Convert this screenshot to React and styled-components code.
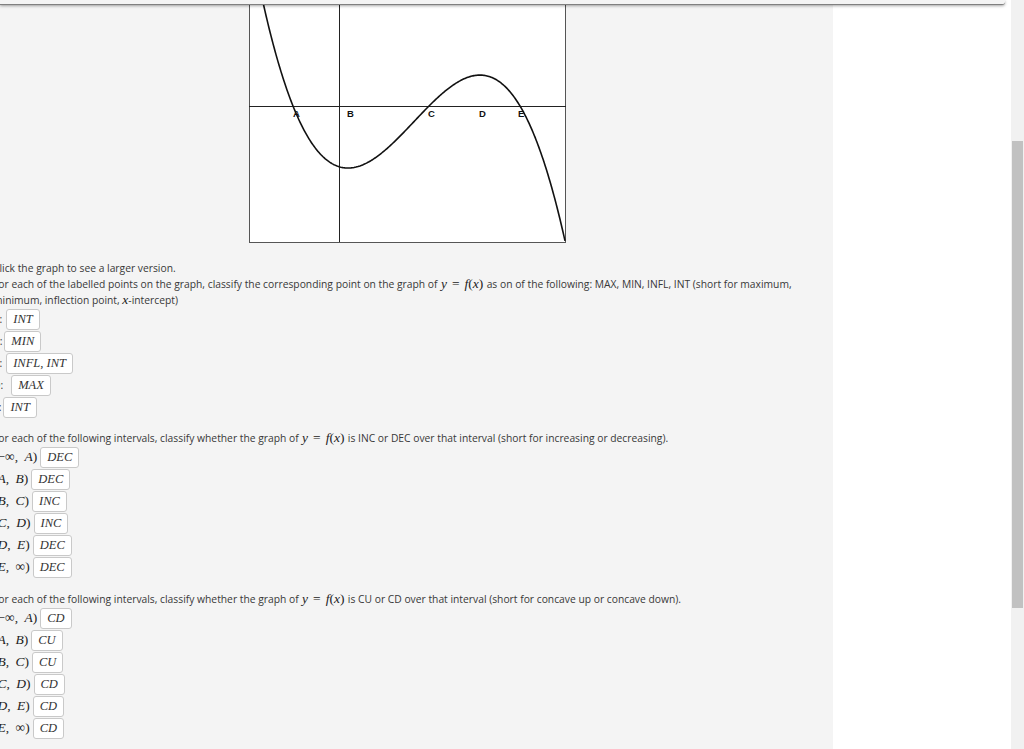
import React from "react";
import styled, { createGlobalStyle } from "styled-components";

const GlobalStyle = createGlobalStyle`
  html, body {
    margin: 0;
    padding: 0;
    height: 749px;
    overflow: hidden;
    background: #ffffff;
  }
  body {
    font-family: "Open Sans", "Noto Sans", sans-serif;
  }
`;

const TopBar = styled.div`
  position: fixed;
  top: 0;
  left: 0;
  width: 1005px;
  height: 4px;
  background: #f4f4f4;
  border-bottom: 1px solid #808080;
  border-bottom-right-radius: 3px;
  box-shadow: 0 1px 3px rgba(0, 0, 0, 0.35);
  z-index: 5;
`;

const Page = styled.div`
  display: flex;
  width: 1024px;
  height: 749px;
`;

const Main = styled.div`
  width: 833px;
  background: #f4f4f4;
  overflow: hidden;
`;

const Side = styled.div`
  width: 178px;
  background: #ffffff;
`;

const ScrollTrack = styled.div`
  width: 13px;
  background: #f1f1f1;
  display: flex;
  flex-direction: column;
`;

const ScrollThumb = styled.div`
  margin: 141px 0 0 1px;
  width: 11px;
  height: 467px;
  background: #c1c1c1;
`;

const Content = styled.div`
  margin-left: -7px;
  color: #383838;
  font-size: 10.3px;
  line-height: 16px;
  white-space: nowrap;
`;

const GraphLink = styled.div`
  margin-left: 256px;
  width: 317px;
  height: 243px;
  cursor: pointer;
`;

const Section = styled.div`
  margin-top: ${(p) => p.top}px;
`;

const Para = styled.div`
  line-height: 16px;
`;

const Row = styled.div`
  display: flex;
  align-items: center;
  height: 22px;
`;

const PointLabel = styled.span`
  margin-right: 4px;
`;

const AnswerBox = styled.span`
  display: inline-flex;
  align-items: center;
  height: 21px;
  padding: 0 6px;
  box-sizing: border-box;
  background: #ffffff;
  border: 1px solid #c9c9c9;
  border-radius: 3px;
  font-family: "Liberation Serif", serif;
  font-style: italic;
  font-size: 12.5px;
  color: #333333;
  margin-left: ${(p) => p.gap || 0}px;
`;

const MathText = styled.span`
  font-family: "Liberation Serif", serif;
  font-size: 13.5px;
  color: #222222;
`;

const MathVar = styled.span`
  font-style: italic;
`;

const MathRel = styled.span`
  padding: 0 5px;
`;

const MathSep = styled.span`
  padding-right: 3px;
`;

const K = 62 / 765510;
const curveY = (X) => 106 + K * (X - 293) * (X - 429) * (X - 520);

function curvePath() {
  const pts = [];
  for (let X = 262; X <= 565.5; X += 1) {
    pts.push(`${(X - 249).toFixed(1)},${curveY(X).toFixed(2)}`);
  }
  return "M" + pts.join(" L");
}

function Graph() {
  const labels = [
    ["A", 44],
    ["B", 98],
    ["C", 179],
    ["D", 230],
    ["E", 269],
  ];
  return (
    <GraphLink>
      <svg width="317" height="243" viewBox="0 0 317 243">
        <rect x="0.5" y="-5" width="316" height="247.5" fill="#ffffff" stroke="#555555" strokeWidth="1" />
        <line x1="0" y1="106.5" x2="317" y2="106.5" stroke="#222222" strokeWidth="1" />
        <line x1="90.5" y1="0" x2="90.5" y2="242" stroke="#222222" strokeWidth="1" />
        <path d={curvePath()} fill="none" stroke="#111111" strokeWidth="1.6" />
        {labels.map(([t, x]) => (
          <text key={t} x={x} y="116.5" fontFamily="Liberation Sans, sans-serif" fontSize="9.5" fontWeight="bold" fill="#111111">
            {t}
          </text>
        ))}
      </svg>
    </GraphLink>
  );
}

function Formula() {
  return (
    <MathText>
      {" "}
      <MathVar>y</MathVar>
      <MathRel>=</MathRel>
      <MathVar>f</MathVar>(<MathVar>x</MathVar>){" "}
    </MathText>
  );
}

function Interval({ a, b }) {
  const show = (v) =>
    v === "-inf" ? "−∞" : v === "inf" ? "∞" : <MathVar>{v}</MathVar>;
  return (
    <MathText>
      ({show(a)},<MathSep> </MathSep>
      {show(b)})
    </MathText>
  );
}

const points = [
  ["A:", "INT", 4],
  ["B:", "MIN", 2],
  ["C:", "INFL, INT", 4],
  ["D:", "MAX", 8],
  ["E:", "INT", 2],
];

const intervals = [
  ["-inf", "A"],
  ["A", "B"],
  ["B", "C"],
  ["C", "D"],
  ["D", "E"],
  ["E", "inf"],
];

const incDec = ["DEC", "DEC", "INC", "INC", "DEC", "DEC"];
const concavity = ["CD", "CU", "CU", "CD", "CD", "CD"];

export default function App() {
  return (
    <>
      <GlobalStyle />
      <TopBar />
      <Page>
        <Main>
          <Content>
            <Graph />
            <Section top={17}>
              <Para>
                Click the graph to see a larger version.
                <br />
                For each of the labelled points on the graph, classify the corresponding point on the graph of
                <Formula />
                as on of the following: MAX, MIN, INFL, INT (short for maximum,
                <br />
                minimum, inflection point, <MathText><MathVar>x</MathVar></MathText>-intercept)
              </Para>
              {points.map(([label, ans, gap]) => (
                <Row key={label}>
                  <PointLabel>{label}</PointLabel>
                  <AnswerBox gap={gap - 4}>{ans}</AnswerBox>
                </Row>
              ))}
            </Section>
            <Section top={12}>
              <Para>
                For each of the following intervals, classify whether the graph of
                <Formula />
                is INC or DEC over that interval (short for increasing or decreasing).
              </Para>
              {intervals.map(([a, b], i) => (
                <Row key={a + b}>
                  <Interval a={a} b={b} />
                  <AnswerBox gap={3}>{incDec[i]}</AnswerBox>
                </Row>
              ))}
            </Section>
            <Section top={13}>
              <Para>
                For each of the following intervals, classify whether the graph of
                <Formula />
                is CU or CD over that interval (short for concave up or concave down).
              </Para>
              {intervals.map(([a, b], i) => (
                <Row key={a + b}>
                  <Interval a={a} b={b} />
                  <AnswerBox gap={3}>{concavity[i]}</AnswerBox>
                </Row>
              ))}
            </Section>
          </Content>
        </Main>
        <Side />
        <ScrollTrack>
          <ScrollThumb />
        </ScrollTrack>
      </Page>
    </>
  );
}
